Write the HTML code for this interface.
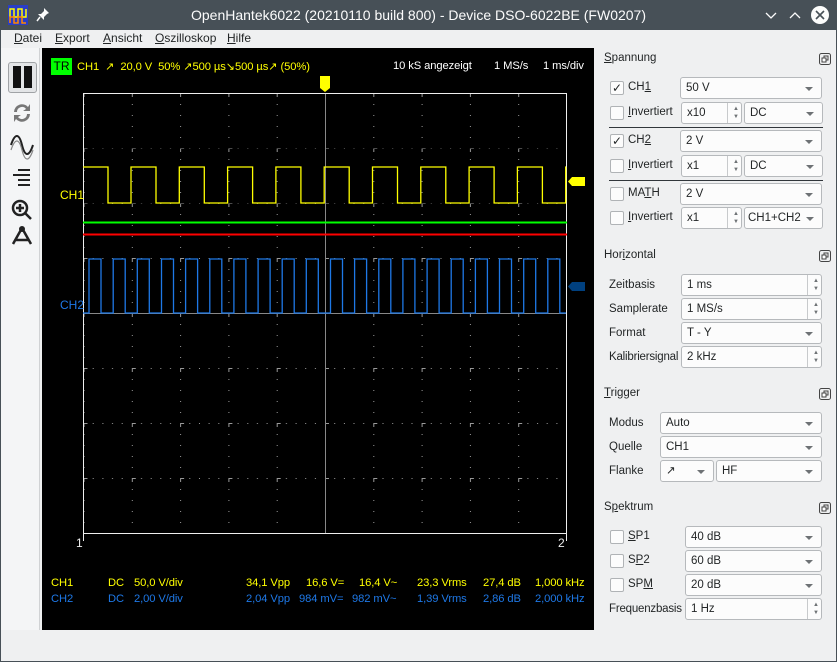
<!DOCTYPE html>
<html><head><meta charset="utf-8"><style>
*{box-sizing:border-box;margin:0;padding:0}
body{width:837px;height:662px;overflow:hidden;background:#eff0f1;font-family:"Liberation Sans",sans-serif;font-size:11.5px;color:#232627;position:relative}
.a{position:absolute}
#title{left:0;top:0;width:837px;height:30px;background:#475057;color:#fcfcfc;font-size:14px;text-align:center;line-height:30px}
#menu{left:0;top:30px;width:837px;height:18px;background:#eff0f1}
#menu span{position:absolute;top:1px;font-size:12px}
u{text-decoration:underline}
#tb{left:1px;top:48px;width:39px;height:582px;background:#f4f5f6;border-right:1px solid #d0d2d4}
#scope{left:42px;top:48px;width:552px;height:582px;background:#000}
.st{font-size:11.2px;white-space:nowrap;letter-spacing:-0.1px}
.y{color:#ffff00}.b{color:#1e78e6}
.box{position:absolute;background:#fcfcfc;border:1px solid #b6b9bc;border-radius:3px;height:22px;font-size:11.5px;line-height:20px;padding-left:5px;white-space:nowrap;overflow:hidden}
.cb{position:absolute;width:14px;height:14px;background:#fcfcfc;border:1px solid #b0b3b6;border-radius:2px;font-size:12px;line-height:12px;text-align:center}
.dd:after{content:"";position:absolute;right:8px;top:9px;border-left:4px solid transparent;border-right:4px solid transparent;border-top:4px solid #6e7275}
.sp:after{content:"";position:absolute;right:13px;top:0;width:1px;height:20px;background:#c8cacc}
.sp:before{content:"▲\A▼";white-space:pre;position:absolute;right:2px;top:2px;font-size:6px;line-height:8px;color:#6e7275}
.lbl{position:absolute;font-size:11.5px;white-space:nowrap}
.fl{position:absolute;width:12px;height:12px}
.sep{position:absolute;height:1px;background:#31363b}
</style></head><body>
<div id="title" class="a">OpenHantek6022 (20210110 build 800) - Device DSO-6022BE (FW0207)</div>
<svg class="a" style="left:8px;top:5px" width="20" height="20"><rect width="20" height="20" fill="#2a3ec8"/><path d="M2 12V4h4v8h4V4h4v8h4V4" stroke="#ff0" fill="none" stroke-width="1.5"/><path d="M2 18V12h4v6h4v-6h4v6h4" stroke="#f80" fill="none" stroke-width="1.5"/></svg>
<svg class="a" style="left:36px;top:7px" width="14" height="16"><path d="M8 1l5 5-2 1-3 3 0 3-6-6 3 0 3-3z" fill="#fcfcfc"/><path d="M4 10l-3 4" stroke="#fcfcfc" stroke-width="1.5"/></svg>
<svg class="a" style="left:760px;top:6px" width="72" height="20"><path d="M6 7l5 5 5-5" stroke="#fcfcfc" fill="none" stroke-width="1.3"/><path d="M30 12l5-5 5 5" stroke="#fcfcfc" fill="none" stroke-width="1.3"/><circle cx="60" cy="9" r="9" fill="#fcfcfc"/><path d="M56 5l8 8M64 5l-8 8" stroke="#475057" stroke-width="1.6"/></svg>
<div id="menu" class="a"><span style="left:14px"><u>D</u>atei</span><span style="left:55px"><u>E</u>xport</span><span style="left:103px"><u>A</u>nsicht</span><span style="left:155px"><u>O</u>szilloskop</span><span style="left:227px"><u>H</u>ilfe</span></div>
<div id="tb" class="a"></div>
<div class="a" style="left:8px;top:62px;width:29px;height:31px;border:1px solid #a0a3a6;border-radius:3px;background:#e3e5e7"></div>
<div class="a" style="left:13px;top:66px;width:8px;height:22px;background:#111"></div>
<div class="a" style="left:24px;top:66px;width:8px;height:22px;background:#111"></div>
<svg class="a" style="left:8px;top:100px" width="30" height="150">
<path d="M6 12a8 8 0 0 1 14-5l2-3v7h-7l3-2a5 5 0 0 0-9 3z" fill="#777"/><path d="M22 14a8 8 0 0 1-14 5l-2 3v-7h7l-3 2a5 5 0 0 0 9-3z" fill="#777"/>
<path d="M3 45c4-12 8-12 11 0s7 12 11 0" stroke="#222" fill="none" stroke-width="2"/><path d="M3 50c4-12 8-12 11 0s7 12 11 0" stroke="#888" fill="none" stroke-width="1.2"/>
<path d="M10 70h12M5 75h17M10 80h12M10 85h12" stroke="#222" stroke-width="2"/>
<circle cx="12" cy="108" r="7" stroke="#222" stroke-width="2.5" fill="none"/><path d="M17 113l6 6M12 104v8M8 108h8" stroke="#222" stroke-width="2.5"/>
<path d="M14 128l-9 16M14 128l9 16M7 140h14" stroke="#222" stroke-width="2.5" fill="none"/><circle cx="14" cy="129" r="3" fill="#222"/>
</svg>
<div id="scope" class="a"></div>
<svg class="a" style="left:0;top:0" width="837" height="662">
<defs><pattern id="gp" x="83.5" y="93" width="48.3" height="55" patternUnits="userSpaceOnUse">
<g fill="#999"><rect x="9.2" y="0" width="1" height="1"/><rect x="18.9" y="0" width="1" height="1"/><rect x="28.5" y="0" width="1" height="1"/><rect x="38.2" y="0" width="1" height="1"/>
<rect x="0" y="11" width="1" height="1"/><rect x="0" y="22" width="1" height="1"/><rect x="0" y="33" width="1" height="1"/><rect x="0" y="44" width="1" height="1"/></g>
<path d="M-3 0.5h7M0.5 -3v7" stroke="#999" stroke-width="1"/>
</pattern>
<g id="flt"><rect x="0.5" y="0.5" width="11" height="11" rx="2" fill="none" stroke="#444"/><rect x="5" y="3" width="4" height="4" fill="none" stroke="#444"/><rect x="3" y="5" width="4" height="4" fill="#fff" stroke="#444"/></g></defs>
<rect x="83" y="93" width="484" height="441" fill="url(#gp)"/>
<path d="M325.5 93v441M83 313.5h484" stroke="#888" stroke-width="1"/>
<rect x="83.5" y="93.5" width="483" height="440" fill="none" stroke="#eee" stroke-width="1"/>
<path d="M83.5 533v8M566.5 533v8" stroke="#eee"/>
<path id="c1" stroke="#ffff00" fill="none" stroke-width="1.3"/>
<path id="c2" stroke="#1e78e6" fill="none" stroke-width="1.3"/>
<path d="M83 222.5h484" stroke="#00ff00" stroke-width="2"/>
<path d="M83 234.5h484" stroke="#ff0000" stroke-width="2"/>
<path d="M320 76h10v12l-5 4-5-4z" fill="#ffff00"/>
<path d="M568 181.5l4-4.5h13v9h-13z" fill="#ffff00"/>
<path d="M568 286.5l4-4.5h13v9h-13z" fill="#00407f"/>
<text x="60" y="199" fill="#ffff00" font-size="12" font-family="Liberation Sans">CH1</text>
<text x="60" y="309" fill="#1e78e6" font-size="12" font-family="Liberation Sans">CH2</text>
<text x="76" y="547" fill="#eee" font-size="12" font-family="Liberation Sans">1</text>
<text x="558" y="547" fill="#eee" font-size="12" font-family="Liberation Sans">2</text>
<use href="#flt" x="819" y="53"/><use href="#flt" x="819" y="250"/><use href="#flt" x="819" y="388"/><use href="#flt" x="819" y="502"/>
</svg>
<script>
var d="M83 167H108V203";var x=131;
while(x<567){d+="H"+x.toFixed(1)+"V167";var f=x+25;if(f>566){d+="H566";break;}d+="H"+f.toFixed(1)+"V203";x+=48.3;}
document.getElementById('c1').setAttribute('d',d);
var e="M83 313";x=89;
while(x<566){e+="H"+x.toFixed(1)+"V259";var f=x+12;if(f>566){e+="H566";break;}e+="H"+f.toFixed(1)+"V313";x+=24.15;}
e+="H566";
document.getElementById('c2').setAttribute('d',e);
</script>
<div class="a" style="left:51px;top:58px;width:21px;height:17px;background:#00ff00;color:#000;font-size:12px;line-height:17px;text-align:center">TR</div>
<div class="a st y" style="left:77px;top:60px">CH1 &nbsp;↗ &nbsp;20,0 V &nbsp;50% ↗500 µs↘500 µs↗ (50%)</div>
<div class="a st" style="left:393px;top:60px;color:#fff">10 kS angezeigt</div>
<div class="a st" style="left:494px;top:60px;color:#fff">1 MS/s</div>
<div class="a st" style="left:543px;top:60px;color:#fff">1 ms/div</div>
<div class="a st y" style="left:51px;top:577px">CH1</div><div class="a st y" style="left:108px;top:577px">DC</div><div class="a st y" style="left:134px;top:577px">50,0 V/div</div>
<div class="a st y" style="left:246px;top:577px">34,1 Vpp</div><div class="a st y" style="left:306px;top:577px">16,6 V=</div><div class="a st y" style="left:359px;top:577px">16,4 V~</div><div class="a st y" style="left:417px;top:577px">23,3 Vrms</div><div class="a st y" style="left:483px;top:577px">27,4 dB</div><div class="a st y" style="left:535px;top:577px">1,000 kHz</div>
<div class="a st b" style="left:51px;top:593px">CH2</div><div class="a st b" style="left:108px;top:593px">DC</div><div class="a st b" style="left:134px;top:593px">2,00 V/div</div>
<div class="a st b" style="left:246px;top:593px">2,04 Vpp</div><div class="a st b" style="left:299px;top:593px">984 mV=</div><div class="a st b" style="left:352px;top:593px">982 mV~</div><div class="a st b" style="left:417px;top:593px">1,39 Vrms</div><div class="a st b" style="left:483px;top:593px">2,86 dB</div><div class="a st b" style="left:535px;top:593px">2,000 kHz</div>

<div class="lbl" style="left:604px;top:52px"><u>S</u>pannung</div>
<div class="cb" style="left:610px;top:81px">✓</div><div class="lbl" style="left:628px;top:81px">CH<u>1</u></div><div class="box dd" style="left:680px;top:77px;width:142px">50 V</div>
<div class="cb" style="left:610px;top:106px"></div><div class="lbl" style="left:628px;top:106px"><u>I</u>nvertiert</div><div class="box sp" style="left:681px;top:102px;width:61px">x10</div><div class="box dd" style="left:744px;top:102px;width:79px">DC</div>
<div class="sep" style="top:127px;left:609px;width:214px"></div>
<div class="cb" style="left:610px;top:134px">✓</div><div class="lbl" style="left:628px;top:134px">CH<u>2</u></div><div class="box dd" style="left:680px;top:130px;width:142px">2 V</div>
<div class="cb" style="left:610px;top:159px"></div><div class="lbl" style="left:628px;top:159px"><u>I</u>nvertiert</div><div class="box sp" style="left:681px;top:155px;width:61px">x1</div><div class="box dd" style="left:744px;top:155px;width:79px">DC</div>
<div class="sep" style="top:180px;left:609px;width:214px"></div>
<div class="cb" style="left:610px;top:187px"></div><div class="lbl" style="left:628px;top:187px">MA<u>T</u>H</div><div class="box dd" style="left:680px;top:183px;width:142px">2 V</div>
<div class="cb" style="left:610px;top:211px"></div><div class="lbl" style="left:628px;top:211px"><u>I</u>nvertiert</div><div class="box sp" style="left:681px;top:207px;width:61px">x1</div><div class="box dd" style="left:744px;top:207px;width:79px;padding-left:3px">CH1+CH2</div>

<div class="lbl" style="left:604px;top:249px">Hor<u>i</u>zontal</div>
<div class="lbl" style="left:609px;top:279px">Zeitbasis</div><div class="box sp" style="left:681px;top:274px;width:141px">1 ms</div>
<div class="lbl" style="left:609px;top:303px">Samplerate</div><div class="box sp" style="left:681px;top:298px;width:141px">1 MS/s</div>
<div class="lbl" style="left:609px;top:327px">Format</div><div class="box dd" style="left:681px;top:322px;width:141px">T - Y</div>
<div class="lbl" style="left:609px;top:351px;letter-spacing:-0.2px">Kalibriersignal</div><div class="box sp" style="left:681px;top:346px;width:141px">2 kHz</div>

<div class="lbl" style="left:604px;top:387px"><u>T</u>rigger</div>
<div class="lbl" style="left:609px;top:417px">Modus</div><div class="box dd" style="left:660px;top:412px;width:162px">Auto</div>
<div class="lbl" style="left:609px;top:441px">Quelle</div><div class="box dd" style="left:660px;top:436px;width:162px">CH1</div>
<div class="lbl" style="left:609px;top:465px">Flanke</div><div class="box dd" style="left:660px;top:460px;width:54px">↗</div><div class="box dd" style="left:716px;top:460px;width:106px">HF</div>

<div class="lbl" style="left:604px;top:501px">S<u>p</u>ektrum</div>
<div class="cb" style="left:610px;top:530px"></div><div class="lbl" style="left:628px;top:530px"><u>S</u>P1</div><div class="box dd" style="left:685px;top:526px;width:137px">40 dB</div>
<div class="cb" style="left:610px;top:554px"></div><div class="lbl" style="left:628px;top:554px">S<u>P</u>2</div><div class="box dd" style="left:685px;top:550px;width:137px">60 dB</div>
<div class="cb" style="left:610px;top:578px"></div><div class="lbl" style="left:628px;top:578px">SP<u>M</u></div><div class="box dd" style="left:685px;top:574px;width:137px">20 dB</div>
<div class="lbl" style="left:609px;top:603px;letter-spacing:-0.2px">Frequenzbasis</div><div class="box sp" style="left:685px;top:598px;width:137px">1 Hz</div>
<div class="a" style="left:0;top:661px;width:837px;height:1px;background:#475057"></div>
<div class="a" style="left:0;top:30px;width:1px;height:632px;background:#475057"></div>
<div class="a" style="left:836px;top:30px;width:1px;height:632px;background:#475057"></div>
</body></html>
